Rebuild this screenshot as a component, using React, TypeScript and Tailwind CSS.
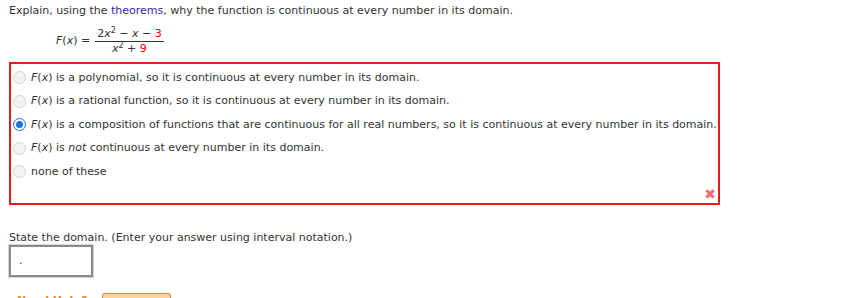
const font = { fontFamily: '"DejaVu Sans", Verdana, sans-serif' };

function Radio({ checked }: { checked?: boolean }) {
  return checked ? (
    <span className="inline-flex h-[13px] w-[13px] shrink-0 items-center justify-center rounded-full border border-[#1a73e8] bg-white">
      <span className="h-[7px] w-[7px] rounded-full bg-[#1a73e8]" />
    </span>
  ) : (
    <span className="inline-block h-[13px] w-[13px] shrink-0 rounded-full border border-[#d4d4d4] bg-[#f3f3f3]" />
  );
}

function Fx() {
  return (
    <span>
      <span className="italic">F</span>(<span className="italic">x</span>)
    </span>
  );
}

const options = [
  { body: <> is a polynomial, so it is continuous at every number in its domain.</> },
  { body: <> is a rational function, so it is continuous at every number in its domain.</> },
  {
    body: (
      <> is a composition of functions that are continuous for all real numbers, so it is continuous at every number in its domain.</>
    ),
    checked: true,
  },
  {
    body: (
      <>
        {" "}is <span className="italic">not</span> continuous at every number in its domain.
      </>
    ),
  },
];

export default function App() {
  return (
    <div className="h-[298px] w-[850px] overflow-hidden bg-white text-[11px] text-[#333]" style={font}>
      <p className="pl-[9px] pt-[4px] leading-[14px]">
        Explain, using the <span className="text-[#3a1ea8]">theorems</span>, why the function is continuous at every number in its domain.
      </p>

      <div className="mt-[9px] flex items-center pl-[56px]">
        <span>
          <Fx /> =
        </span>
        <span className="ml-[5px] inline-flex flex-col items-center">
          <span className="border-b border-[#333] px-[2px] leading-[14px]">
            2<span className="italic">x</span>
            <sup className="text-[8px]">2</sup> − <span className="italic">x</span> − <span className="text-[#e00]">3</span>
          </span>
          <span className="leading-[14px]">
            <span className="italic">x</span>
            <sup className="text-[8px]">2</sup> + <span className="text-[#e00]">9</span>
          </span>
        </span>
      </div>

      <div className="ml-[9px] mt-[6px] h-[143px] w-[711px] border-2 border-[#e41b1b] pl-[2px] pr-[2px] pt-[2px]">
        {options.map((o, i) => (
          <div key={i} className="flex h-[23.5px] items-center gap-[5px] whitespace-nowrap">
            <Radio checked={o.checked} />
            <span>
              <Fx />
              {o.body}
            </span>
          </div>
        ))}
        <div className="flex h-[23.5px] items-center gap-[5px]">
          <Radio />
          <span>none of these</span>
        </div>
        <div className="mt-[3px] flex justify-end">
          <span className="text-[14px] font-bold leading-none text-[#f26d6d]">✖</span>
        </div>
      </div>

      <p className="mt-[26px] pl-[9px] leading-[14px]">
        State the domain. (Enter your answer using interval notation.)
      </p>
      <div className="ml-[9px] flex h-[32px] w-[84px] items-center border-2 border-[#8a8a8a] pl-[8px] outline outline-1 outline-[#d6d6d6]">
        <span className="text-[#444]">.</span>
      </div>

      <div className="mt-[16px] flex items-start gap-[14px] pl-[17px]">
        <span className="font-bold text-[#e8891e]">Need Help?</span>
        <span className="h-[20px] w-[69px] rounded-[2px] border border-[#d08b3c] bg-[#fbd3a4]" />
      </div>
    </div>
  );
}
